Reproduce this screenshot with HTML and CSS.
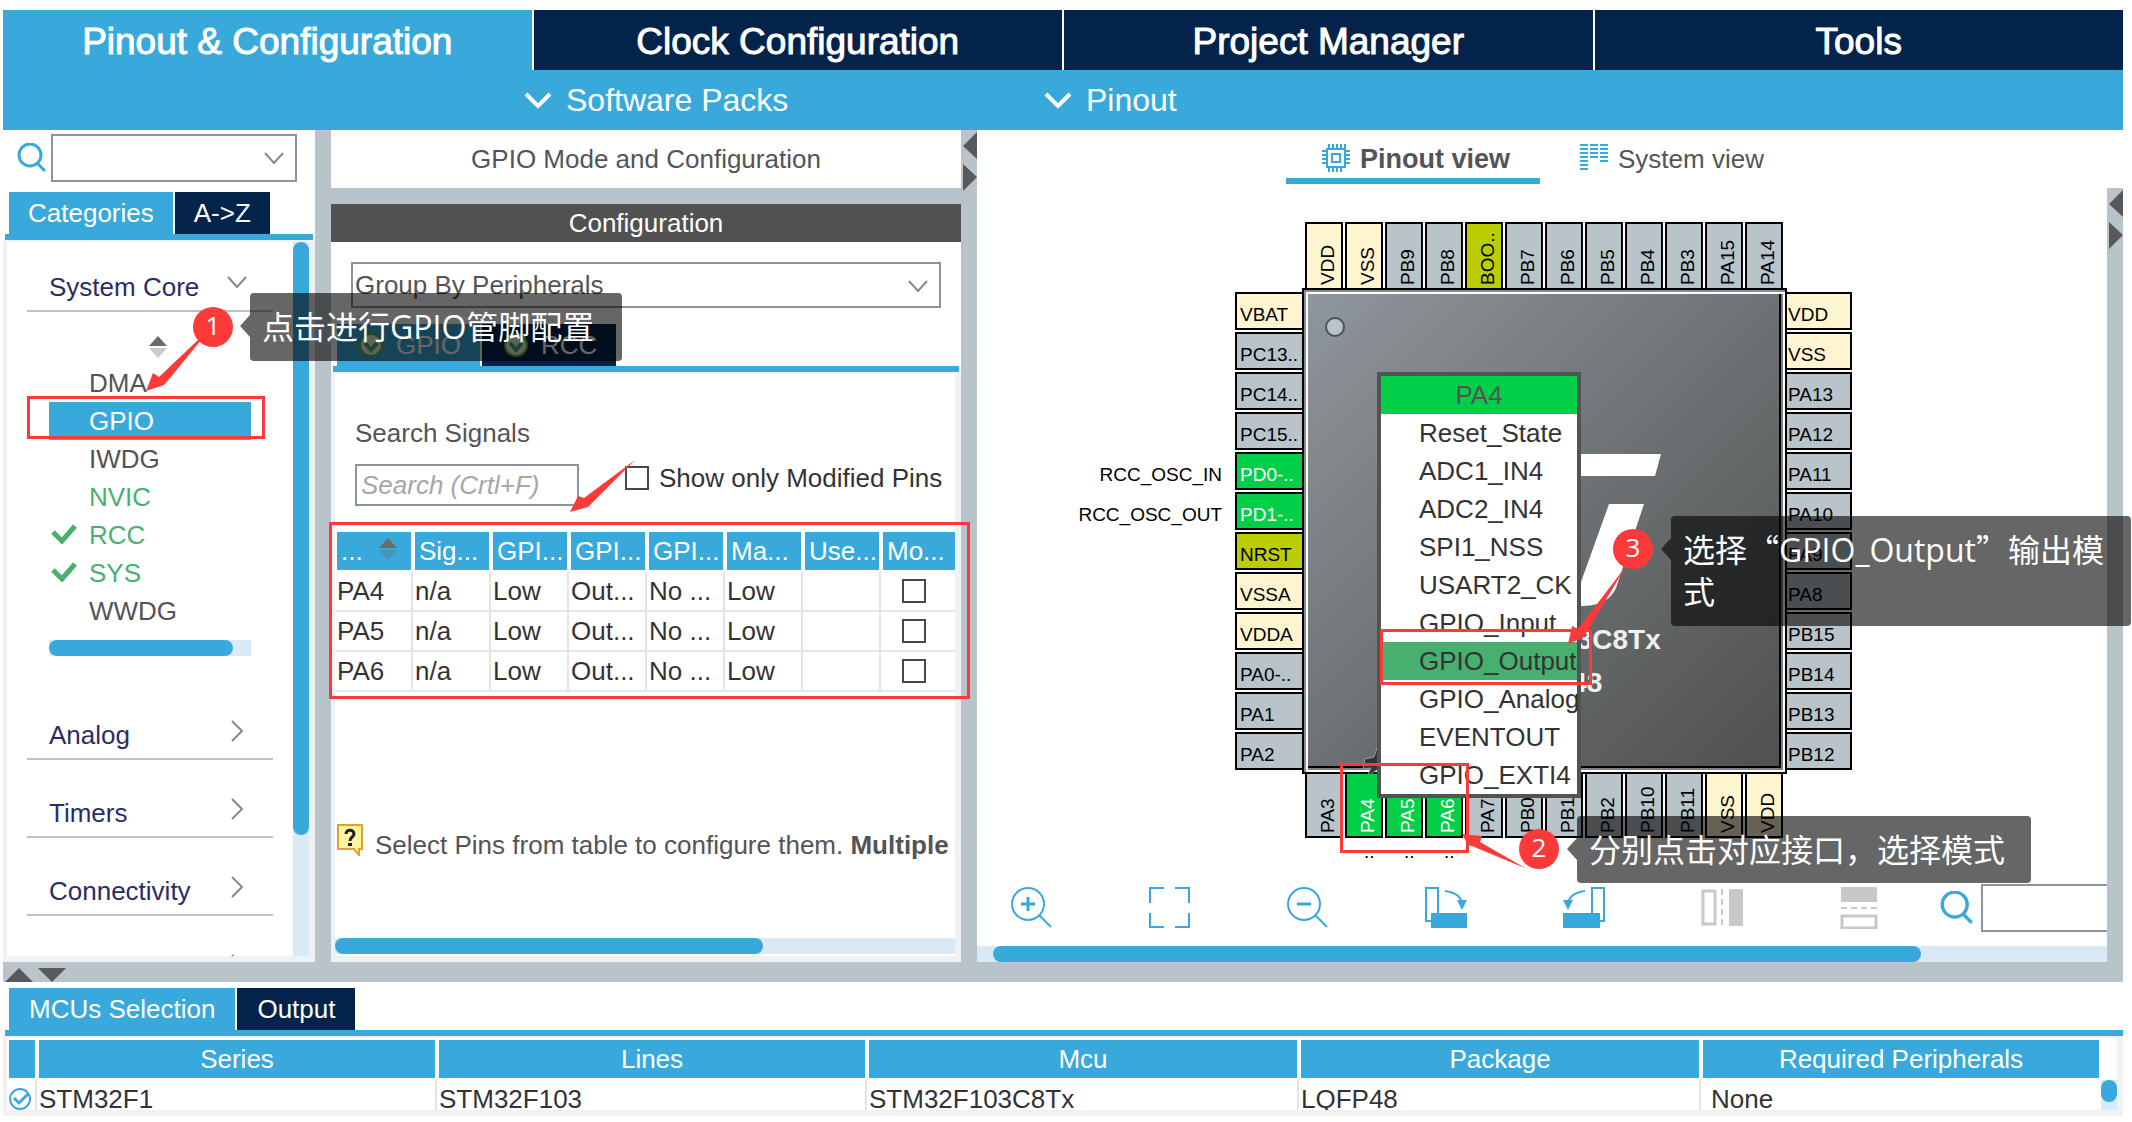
FILE: index.html
```html
<!DOCTYPE html>
<html lang="zh-CN">
<head>
<meta charset="utf-8">
<title>Pinout &amp; Configuration</title>
<link rel="stylesheet" href="styles.css">
</head>
<body>
<svg class="defs" width="0" height="0" aria-hidden="true">
  <symbol id="i-down" viewBox="0 0 20 12"><path d="M1 1l9 10 9-10" fill="none" stroke="#888" stroke-width="2"/></symbol>
  <symbol id="i-down-bold" viewBox="0 0 28 18"><path d="M2 3l12 12L26 3" fill="none" stroke="#fff" stroke-width="4"/></symbol>
  <symbol id="i-right" viewBox="0 0 14 22"><path d="M2 1l10 10L2 21" fill="none" stroke="#888" stroke-width="2"/></symbol>
  <symbol id="i-search" viewBox="0 0 30 30"><circle cx="13" cy="12" r="11" fill="none" stroke="#39a9dc" stroke-width="3"/><path d="M20 20l8 8" stroke="#39a9dc" stroke-width="3"/></symbol>
  <symbol id="i-sort" viewBox="0 0 18 22"><path d="M9 0l9 10H0z" fill="#6b6b6b"/><path d="M0 12h18l-9 10z" fill="#6b6b6b" opacity=".35"/></symbol>
  <symbol id="i-check" viewBox="0 0 26 20"><path d="M2 8l9 9L24 2" fill="none" stroke="#49b170" stroke-width="5"/></symbol>
  <symbol id="i-badge" viewBox="0 0 24 24"><circle cx="12" cy="12" r="11" fill="#eef3ee" stroke="#5cb531" stroke-width="2"/><path d="M6 10l6 7 6-7" fill="none" stroke="#49b170" stroke-width="4"/></symbol>
</svg>

<div class="app">
  <nav class="main-tabs">
    <button class="main-tab active">Pinout &amp; Configuration</button>
    <button class="main-tab">Clock Configuration</button>
    <button class="main-tab">Project Manager</button>
    <button class="main-tab">Tools</button>
  </nav>
  <div class="sub-menu">
    <button class="sub-item packs"><svg width="28" height="18"><use href="#i-down-bold"/></svg>Software Packs</button>
    <button class="sub-item"><svg width="28" height="18"><use href="#i-down-bold"/></svg>Pinout</button>
  </div>

  <main class="work">
    <aside class="side">
      <div class="side-search">
        <svg width="30" height="30"><use href="#i-search"/></svg>
        <div class="select-wrap">
          <select aria-label="Search peripheral"><option></option></select>
          <svg width="20" height="12"><use href="#i-down"/></svg>
        </div>
      </div>
      <div class="tabs"><button class="tab active">Categories</button><button class="tab">A-&gt;Z</button></div>
      <div class="side-body">
        <div class="tree">
          <button class="section">System Core<svg class="open" width="20" height="12"><use href="#i-down"/></svg></button>
          <div class="group">
            <svg class="sort" width="18" height="22"><use href="#i-sort"/></svg>
            <ul class="items">
              <li>DMA</li>
              <li class="selected">GPIO</li>
              <li>IWDG</li>
              <li class="ok">NVIC</li>
              <li class="ok"><svg width="26" height="20"><use href="#i-check"/></svg>RCC</li>
              <li class="ok"><svg width="26" height="20"><use href="#i-check"/></svg>SYS</li>
              <li>WWDG</li>
            </ul>
            <div class="hbar small"><span></span></div>
          </div>
          <button class="section">Analog<svg width="14" height="22"><use href="#i-right"/></svg></button>
          <button class="section">Timers<svg width="14" height="22"><use href="#i-right"/></svg></button>
          <button class="section">Connectivity<svg width="14" height="22"><use href="#i-right"/></svg></button>
          <button class="section last" aria-label="More"><svg width="14" height="22"><use href="#i-right"/></svg></button>
        </div>
        <div class="vbar"><span></span></div>
      </div>
    </aside>

    <div class="splitter"></div>

    <section class="config">
      <h2 class="config-title">GPIO Mode and Configuration</h2>
      <h3 class="config-head">Configuration</h3>
      <div class="config-group">
        <div class="select-wrap">
          <select aria-label="Grouping"><option>Group By Peripherals</option></select>
          <svg width="20" height="12"><use href="#i-down"/></svg>
        </div>
      </div>
      <div class="tabs inner">
        <button class="tab active"><svg width="24" height="24"><use href="#i-badge"/></svg>GPIO</button><button class="tab"><svg width="24" height="24"><use href="#i-badge"/></svg>RCC</button>
      </div>
      <div class="config-body">
        <label class="sig-label" for="sig">Search Signals</label>
        <div class="sig-row">
          <input id="sig" class="sig-input" type="text" placeholder="Search (Crtl+F)">
          <label class="modified"><input type="checkbox" class="box">Show only Modified Pins</label>
        </div>
        <table class="pins-table">
          <thead><tr><th class="sorted">...<svg width="18" height="22"><use href="#i-sort"/></svg></th><th>Sig...</th><th>GPI...</th><th>GPI...</th><th>GPI...</th><th>Ma...</th><th>Use...</th><th>Mo...</th></tr></thead>
          <tbody>
            <tr><td>PA4</td><td>n/a</td><td>Low</td><td>Out...</td><td>No ...</td><td>Low</td><td></td><td class="tick"><input type="checkbox" class="box" aria-label="PA4 modified"></td></tr>
            <tr><td>PA5</td><td>n/a</td><td>Low</td><td>Out...</td><td>No ...</td><td>Low</td><td></td><td class="tick"><input type="checkbox" class="box" aria-label="PA5 modified"></td></tr>
            <tr><td>PA6</td><td>n/a</td><td>Low</td><td>Out...</td><td>No ...</td><td>Low</td><td></td><td class="tick"><input type="checkbox" class="box" aria-label="PA6 modified"></td></tr>
          </tbody>
        </table>
        <p class="hint">
          <svg width="26" height="32" viewBox="0 0 26 32"><path d="M1 1h24v24h-3v6l-5-6H1z" fill="#fff3a0" stroke="#d9a52c" stroke-width="2"/><path d="M9 10c0-5 8-5 8 0 0 3-4 3-4 7" fill="none" stroke="#222" stroke-width="3"/><path d="M11 19h4v3h-4z" fill="#222"/></svg>
          <span>Select Pins from table to configure them. <b>Multiple</b></span>
        </p>
        <div class="hbar config-bar"><span></span></div>
      </div>
    </section>

    <div class="splitter">
      <svg width="16" height="64" viewBox="0 0 16 64"><path d="M16 2v27L2 16zM2 34v27l14-14z" fill="#58595b"/></svg>
    </div>

    <section class="view">
      <div class="view-tabs">
        <button class="view-tab active">
          <svg width="28" height="28" viewBox="0 0 28 28" fill="none" stroke="#39a9dc" stroke-width="2"><path d="M5 5h18v18H5zM10 10h8v8h-8zM7 0v4M11 0v4M15 0v4M19 0v4M7 24v4M11 24v4M15 24v4M19 24v4M23 0v4M0 7h4M0 11h4M0 15h4M0 19h4M24 7h4M24 11h4M24 15h4M24 19h4"/></svg>Pinout view</button>
        <button class="view-tab">
          <svg width="28" height="28" viewBox="0 0 28 28" fill="none" stroke="#39a9dc" stroke-width="2"><path d="M0 1h8M10 1h8M20 1h8M0 5h8M10 5h8M20 5h8M0 9h8M10 9h8M20 9h8M0 13h8M10 13h8M20 13h8M0 17h8M20 17h8M0 21h8M0 25h8"/></svg>System view</button>
      </div>

      <div class="canvas">
        <div class="package">
          <div class="row top">
            <i class="pwr">VDD</i><i class="pwr">VSS</i><i>PB9</i><i>PB8</i><i class="sys">BOO..</i><i>PB7</i><i>PB6</i><i>PB5</i><i>PB4</i><i>PB3</i><i>PA15</i><i>PA14</i>
          </div>
          <div class="col left">
            <i class="pwr">VBAT</i><i>PC13..</i><i>PC14..</i><i>PC15..</i><i class="on"><em>RCC_OSC_IN</em>PD0-..</i><i class="on"><em>RCC_OSC_OUT</em>PD1-..</i><i class="sys">NRST</i><i class="pwr">VSSA</i><i class="pwr">VDDA</i><i>PA0-..</i><i>PA1</i><i>PA2</i>
          </div>
          <div class="die">
            <svg class="logo" width="477" height="490" viewBox="0 0 477 490" aria-hidden="true">
              <circle cx="29" cy="35" r="9" fill="#b8c4ca" stroke="#4a5254" stroke-width="2"/>
              <path d="M155 162h200l-6 22H260l-8 30h-50z" fill="#fff"/>
              <path d="M303 212h35l-28 84q-8 18-35 18V290z" fill="#fff"/>
              <path d="M72 453l-4 12-9 2-2 10 8-1-4 9 11-8z" fill="#333" stroke="#999"/>
            </svg>
            <p class="part">STM32F103C8Tx</p>
            <p class="pkg">LQFP48</p>
          </div>
          <div class="col right">
            <i class="pwr">VDD</i><i class="pwr">VSS</i><i>PA13</i><i>PA12</i><i>PA11</i><i>PA10</i><i>PA9</i><i>PA8</i><i>PB15</i><i>PB14</i><i>PB13</i><i>PB12</i>
          </div>
          <div class="row bottom">
            <i>PA3</i><i class="on">PA4</i><i class="on">PA5</i><i class="on">PA6</i><i>PA7</i><i>PB0</i><i>PB1</i><i>PB2</i><i>PB10</i><i>PB11</i><i class="pwr">VSS</i><i class="pwr">VDD</i>
          </div>
          <div class="stubs"><span>..</span><span>..</span><span>..</span></div>

          <div class="menu" role="menu">
            <div class="menu-title">PA4</div>
            <button>Reset_State</button><button>ADC1_IN4</button><button>ADC2_IN4</button><button>SPI1_NSS</button><button>USART2_CK</button><button>GPIO_Input</button><button class="hot">GPIO_Output</button><button>GPIO_Analog</button><button>EVENTOUT</button><button>GPIO_EXTI4</button>
          </div>

          <div class="frame f-output"></div>
          <div class="frame f-pins"></div>
          <div class="tip t3">选择<q>“</q>GPIO_Output<q>”</q>输出模式</div>
          <div class="tip t2">分别点击对应接口，选择模式</div>
          <svg class="arrow a3" width="60" height="84" viewBox="0 0 60 84"><path d="M59 2L21 66l-5 8L1 80 5 62l6 3z" fill="#fd3a3a"/></svg>
          <svg class="arrow a2" width="68" height="40" viewBox="0 0 68 40"><path d="M66 37L19 10l2-6L1 2l6 11 4 1z" fill="#fd3a3a"/></svg>
          <b class="num n3">3</b>
          <b class="num n2">2</b>
        </div>
      </div>

      <div class="tools">
        <button aria-label="Zoom in"><svg width="42" height="42" viewBox="0 0 42 42" fill="none" stroke="#39a9dc" stroke-width="2"><circle cx="17" cy="17" r="16"/><path d="M28 28l12 12"/><path d="M10 17h14M17 10v14" stroke-width="3"/></svg></button>
        <button aria-label="Fit"><svg width="42" height="42" viewBox="0 0 42 42" fill="none" stroke="#39a9dc" stroke-width="2"><path d="M1 16V1h14M26 1h14v15M1 26v14h14M26 40h14V26"/></svg></button>
        <button aria-label="Zoom out"><svg width="42" height="42" viewBox="0 0 42 42" fill="none" stroke="#39a9dc" stroke-width="2"><circle cx="17" cy="17" r="16"/><path d="M28 28l12 12"/><path d="M10 17h14" stroke-width="3"/></svg></button>
        <button aria-label="Rotate right"><svg width="42" height="42" viewBox="0 0 42 42"><path d="M1 1h12v33H1z" fill="none" stroke="#39a9dc" stroke-width="2"/><path d="M6 26h36v15H6z" fill="#39a9dc"/><path d="M20 4q15 2 17 12" fill="none" stroke="#39a9dc" stroke-width="2"/><path d="M32 13h10l-5 10z" fill="#39a9dc"/></svg></button>
        <button aria-label="Rotate left"><svg width="42" height="42" viewBox="0 0 42 42"><path d="M29 1h12v33H29z" fill="none" stroke="#39a9dc" stroke-width="2"/><path d="M0 26h37v15H0z" fill="#39a9dc"/><path d="M22 4Q7 6 5 16" fill="none" stroke="#39a9dc" stroke-width="2"/><path d="M0 13h10L5 23z" fill="#39a9dc"/></svg></button>
        <button aria-label="Mirror"><svg width="42" height="42" viewBox="0 0 42 42"><path d="M2 4h12v33H2z" fill="none" stroke="#c8c8c8" stroke-width="3"/><path d="M21 2v36" stroke="#c8c8c8" stroke-width="2" stroke-dasharray="6 4"/><path d="M28 2h14v37H28z" fill="#c8c8c8"/></svg></button>
        <button aria-label="Flip"><svg width="42" height="42" viewBox="0 0 42 42"><path d="M2 0h36v15H2zM2 20h6v2H2zM12 20h6v2h-6zM22 20h6v2h-6zM32 20h6v2h-6z" fill="#c8c8c8"/><path d="M3 29h34v12H3z" fill="none" stroke="#c8c8c8" stroke-width="3"/></svg></button>
        <div class="find"><svg width="34" height="34"><use href="#i-search"/></svg><input type="text" aria-label="Find pin"></div>
      </div>
      <div class="hbar view-bar"><span></span></div>
    </section>
    <div class="splitter edge">
      <svg width="16" height="64" viewBox="0 0 16 64"><path d="M16 2v27L2 16zM2 34v27l14-14z" fill="#58595b"/></svg>
    </div>

    <div class="note note-left">
      <div class="frame f-gpio"></div>
      <div class="frame f-table"></div>
      <svg class="arrow a1" width="62" height="72" viewBox="0 0 62 72"><path d="M57 17L25 56l-6 7L1 69 8 51l6 4L54 17z" fill="#fd3a3a"/></svg>
      <svg class="arrow a4" width="66" height="54" viewBox="0 0 66 54"><path d="M66 0L25 41l-6 6L1 52 9 36l6 2z" fill="#fd3a3a"/></svg>
      <div class="tip t1">点击进行GPIO管脚配置</div>
      <b class="num n1">1</b>
    </div>
  </main>

  <div class="h-splitter"><svg width="62" height="14" viewBox="0 0 62 14"><path d="M0 14L14 0l14 14zM33 0h28L47 14z" fill="#58595b"/></svg></div>

  <section class="bottom-panel">
    <div class="tabs"><button class="tab active">MCUs Selection</button><button class="tab">Output</button></div>
    <div class="mcu-body">
      <table class="mcu-table">
        <colgroup><col class="c-mark"><col class="c-series"><col class="c-lines"><col class="c-mcu"><col class="c-pack"><col></colgroup>
        <thead><tr><th></th><th>Series</th><th>Lines</th><th>Mcu</th><th>Package</th><th>Required Peripherals</th></tr></thead>
        <tbody><tr>
          <td><svg width="22" height="22" viewBox="0 0 22 22" fill="none" stroke="#39a9dc" stroke-width="2"><circle cx="11" cy="11" r="10"/><path d="M5 10l5 5 9-9" stroke-width="3"/></svg></td>
          <td>STM32F1</td><td>STM32F103</td><td>STM32F103C8Tx</td><td>LQFP48</td><td class="none">None</td>
        </tr></tbody>
      </table>
      <div class="vbar mcu-bar"><span></span></div>
    </div>
  </section>
</div>
</body>
</html>
```
FILE: styles.css
```css
:root {
  --blue: #39a9dc;
  --navy: #03234b;
  --gray: #b8c4ca;
  --pale: #f0f1f3;
  --track: #d9e9f5;
  --text: #545456;
  --red: #fd3a3a;
}

* { box-sizing: border-box; }

body {
  margin: 0;
  background: #fff;
  font: 26px/38px "Liberation Sans", Arial, sans-serif;
  color: var(--text);
}

button, input, select { font: inherit; color: inherit; margin: 0; }
button { border: 0; background: none; padding: 0; white-space: nowrap; }
h2, h3, p, ul { margin: 0; padding: 0; font-weight: 400; font-size: 26px; }
svg { display: block; flex: none; }
.defs { position: absolute; }

.app {
  display: flex;
  flex-direction: column;
  height: 100vh;
  padding: 10px 9px 6px 3px;
  overflow: hidden;
}

/* header */
.main-tabs { display: grid; grid-template-columns: repeat(4, 1fr); gap: 2px; }
.main-tab {
  height: 60px;
  padding-top: 3px;
  background: var(--navy);
  color: #fff;
  font-size: 37px;
  -webkit-text-stroke: 1px #fff;
}
.main-tab.active { background: var(--blue); }
.sub-menu {
  display: flex;
  height: 60px;
  padding-left: 521px;
  background: var(--blue);
}
.sub-item { display: flex; align-items: center; gap: 14px; color: #fff; font-size: 32px; }
.packs { width: 520px; }

/* work area */
.work {
  position: relative;
  flex: 1;
  min-height: 0;
  display: grid;
  grid-template-columns: 312px 16px minmax(0, 63fr) 16px minmax(0, 113fr) 16px;
  grid-template-rows: minmax(0, 1fr);
}
.splitter { background: var(--gray); }
.edge { margin-top: 58px; }

.tabs { display: flex; gap: 2px; padding-left: 4px; border-bottom: 6px solid var(--blue); margin: 0 2px; }
.tab {
  height: 42px;
  padding: 0 19px;
  background: var(--navy);
  color: #fff;
  display: flex;
  align-items: center;
}
.tab.active { background: var(--blue); }

.select-wrap { position: relative; display: flex; flex: 1; }
.select-wrap select {
  appearance: none;
  width: 100%;
  border: 2px solid #8b949b;
  border-radius: 0;
  background: #fff;
  padding: 0 2px;
}
.select-wrap svg { position: absolute; right: 13px; top: 18px; }

/* left */
.side { display: flex; flex-direction: column; min-height: 0; }
.side-search { display: flex; align-items: center; gap: 4px; padding: 4px 18px 10px 14px; }
.side-search select { height: 48px; }
.side-body {
  flex: 1;
  min-height: 0;
  display: flex;
  border: solid var(--pale);
  border-width: 2px 6px 6px 4px;
}
.tree { flex: 1; overflow: hidden; padding: 0 20px; }
.section {
  display: flex;
  align-items: flex-end;
  justify-content: space-between;
  width: 100%;
  height: 78px;
  padding: 0 29px 4px 22px;
  border-bottom: 2px solid var(--gray);
  color: #2a2c68;
}
.section:first-child { height: 70px; padding-right: 26px; }
.section svg { margin-bottom: 12px; }
.section .open { margin-bottom: 18px; }
.last { justify-content: flex-end; }
.group { padding: 24px 22px 26px; }
.sort { margin: 0 0 6px 100px; }
.items { list-style: none; }
.items li { position: relative; padding-left: 40px; height: 38px; }
.items svg { position: absolute; left: 2px; top: 8px; }
.items .selected { background: var(--blue); color: #fff; }
.items .ok { color: #49b170; }

.hbar { height: 16px; background: var(--track); }
.hbar span { display: block; height: 100%; border-radius: 8px; background: var(--blue); }
.small { margin-top: 10px; }
.small span { width: 91%; }
.vbar { width: 16px; background: var(--track); }
.vbar span { display: block; border-radius: 8px; background: var(--blue); height: 83%; }

/* centre */
.config { display: flex; flex-direction: column; min-height: 0; }
.config-title { text-align: center; line-height: 58px; border-bottom: 16px solid var(--gray); height: 74px; }
.config-head { text-align: center; background: #505150; color: #fff; }
.config-group { padding: 20px 20px 16px; }
.config-group select { height: 46px; }
.inner .tab { gap: 13px; padding-left: 22px; }
.config-body {
  flex: 1;
  min-height: 0;
  display: flex;
  flex-direction: column;
  border: solid var(--pale);
  border-width: 2px 6px 6px 4px;
  padding: 40px 0 2px;
  overflow: hidden;
}
.sig-label { padding-left: 20px; }
.sig-row { display: flex; align-items: flex-start; gap: 46px; padding: 12px 0 26px 20px; }
.sig-input { width: 224px; height: 42px; border: 2px solid #8b949b; padding: 0 4px; }
.sig-input::placeholder { color: #a6a6a6; font-style: italic; opacity: 1; }
.modified { display: flex; align-items: center; gap: 10px; height: 28px; color: #333; white-space: nowrap; }
.box { appearance: none; width: 24px; height: 24px; border: 2px solid #484848; background: #fff; display: block; }

table { border-collapse: separate; border-spacing: 0; table-layout: fixed; }
th, td { padding: 0; font-weight: 400; white-space: nowrap; overflow: hidden; }
.pins-table { width: 624px; flex: none; }
.pins-table th {
  height: 40px;
  text-align: left;
  background: var(--blue);
  color: #fff;
  border: solid #fff;
  border-width: 0 2px 2px;
  padding-left: 4px;
}
.pins-table .sorted svg { float: right; margin: 6px 14px 0 0; }
.pins-table td { height: 40px; color: #333; border: solid #e1e4e8; border-width: 0 2px 2px 0; padding-left: 2px; }
.pins-table td:last-child { border-right: 0; }
.pins-table .tick { padding: 0 12px 0 0; }
.tick .box { margin: 0 auto; }

.hint { display: flex; gap: 12px; margin: 128px 0 0 2px; white-space: nowrap; }
.hint svg { margin-top: 4px; }
.hint span { padding-top: 6px; }
.config-bar { margin-top: auto; flex: none; }
.config-bar span { width: 69%; }

/* right */
.view { display: flex; flex-direction: column; min-height: 0; }
.view-tabs { display: flex; justify-content: center; gap: 4px; margin-top: 12px; margin-bottom: 38px; }
.view-tab { display: flex; align-items: flex-start; gap: 10px; height: 42px; padding: 0 34px 0 36px; border-bottom: 6px solid transparent; line-height: 34px; }
.view-tab svg { margin-top: 2px; }
.view-tab.active { font-size: 27px; font-weight: 700; border-color: var(--blue); width: 254px; padding-right: 0; }
.canvas { display: flex; justify-content: center; flex: 1; min-height: 0; }

.package {
  position: relative;
  flex: none;
  display: grid;
  grid-template-columns: 67px 485px 65px;
  grid-template-rows: 66px 486px 64px;
  margin-left: 3px;
  height: 616px;
  font-size: 19px;
}
.package i {
  font-style: normal;
  color: #000;
  background: var(--gray);
  border: 2px solid #000;
  line-height: 42px;
  position: relative;
}
.package .pwr { background: #fff5d0; }
.package .sys { background: #bbcc00; }
.package .on { background: #02cf48; color: #fff; }
.col { display: flex; flex-direction: column; gap: 2px; padding-top: 4px; }
.col i { height: 38px; padding-left: 3px; }
.left { grid-area: 2 / 1; }
.left i { border-right: 0; }
.left em { position: absolute; right: 80px; color: #000; font-style: normal; }
.right { grid-area: 2 / 3; }
.right i { border-left: 0; padding-left: 1px; }
.row { grid-column: 2; display: flex; gap: 2px; padding-left: 3px; }
.row i { width: 38px; writing-mode: vertical-rl; transform: rotate(180deg); padding-top: 3px; }
.top { grid-row: 1; }
.top i { border-top-width: 0; }
.bottom { grid-row: 3; }
.bottom i { border-bottom-width: 0; }
.die {
  grid-area: 2 / 2;
  border: 2px solid #000;
  background: linear-gradient(135deg, #8f979f, #7f8486 25%, #6a6e70 55%, #4f504f);
  box-shadow: inset 2px 2px #888d92, inset -2px -2px #fff, inset 4px 4px #fff, inset -4px -4px #808080, inset -6px -6px #000;
  padding: 328px 0 0 10px;
  text-align: center;
  position: relative;
}
.logo { position: absolute; left: 2px; top: 2px; }
.die p { position: relative; color: #f0f0f0; font-size: 28px; font-weight: 700; line-height: 43px; }
.stubs { position: absolute; left: 129px; top: 620px; display: flex; color: #000; line-height: 20px; }
.stubs span { width: 40px; }

.menu {
  position: absolute;
  left: 142px;
  top: 150px;
  width: 204px;
  border: 4px solid #505453;
  background: #fff;
  font-size: 26px;
  display: flex;
  flex-direction: column;
}
.menu-title { background: #02cf48; text-align: center; }
.menu button { height: 38px; padding-left: 38px; text-align: left; color: #333; }
.menu .hot { background: #48b06f; }

.tools { display: grid; grid-template-columns: repeat(6, 138px) 101px 1fr; align-items: center; height: 48px; margin-bottom: 14px; padding-left: 34px; flex: none; }
.find { display: flex; align-items: center; gap: 7px; min-width: 0; }
.find input { flex: 1; min-width: 0; height: 48px; border: 2px solid #8b949b; border-right: 0; background: #fff; }
.view-bar { padding-left: 16px; flex: none; }
.view-bar span { width: 928px; max-width: 100%; }

/* tutorial callouts */
.note-left { position: absolute; left: 0; top: 0; }
.frame { position: absolute; border: 3px solid var(--red); }
.f-gpio { left: 24px; top: 266px; width: 238px; height: 43px; }
.f-table { left: 326px; top: 392px; width: 641px; height: 177px; }
.f-output { left: 145px; top: 407px; width: 212px; height: 56px; }
.f-pins { left: 105px; top: 541px; width: 129px; height: 90px; }
.arrow { position: absolute; }
.a1 { left: 142px; top: 192px; }
.a4 { left: 566px; top: 330px; }
.a3 { left: 332px; top: 342px; }
.a2 { left: 226px; top: 610px; }
.num {
  position: absolute;
  width: 40px;
  height: 40px;
  border-radius: 50%;
  background: var(--red);
  color: #fff;
  font: 26px/37px "Open Sans", "Noto Sans", sans-serif;
  text-align: center;
}
.n1 { left: 190px; top: 177px; }
.n2 { left: 284px; top: 607px; }
.n3 { left: 378px; top: 307px; }
.tip {
  position: absolute;
  background: rgba(0, 0, 0, .6);
  border-radius: 4px;
  color: #fff;
  padding: 13px 12px;
  font: 32px/42px "Open Sans", "Noto Sans CJK SC", sans-serif;
}
.tip::before {
  content: "";
  position: absolute;
  left: -10px;
  top: 22px;
  border: solid transparent;
  border-width: 11px 10px 11px 0;
  border-right-color: rgba(0, 0, 0, .6);
}
.tip q { font-family: "Noto Sans CJK SC", sans-serif; quotes: none; }
.tip q::before, .tip q::after { content: none; }
.t1 { left: 247px; top: 163px; width: 372px; height: 68px; white-space: nowrap; }
.t2 { left: 342px; top: 594px; width: 454px; height: 67px; white-space: nowrap; }
.t3 { left: 436px; top: 294px; width: 460px; height: 110px; padding-top: 11px; }

/* bottom */
.h-splitter { background: var(--gray); height: 20px; padding: 6px 0 0 2px; flex: none; }
.bottom-panel { flex: none; padding-top: 6px; }
.bottom-panel .tabs { margin-right: 0; }
.bottom-panel .tab { padding: 0 20px; }
.mcu-body { display: flex; height: 80px; overflow: hidden; border: solid var(--pale); border-width: 2px 6px 6px 4px; padding-top: 2px; }
.mcu-table { flex: 1; width: 100%; }
.mcu-table th { height: 40px; background: var(--blue); color: #fff; border: solid #fff; border-width: 0 2px 2px; }
.mcu-table td { height: 38px; color: #333; border-right: 2px solid #e1e4e8; padding-left: 2px; }
.mcu-table td:last-child { border-right: 0; }
.mcu-table td.none { padding-left: 10px; }
.c-mark { width: 30px; }
.c-series { width: 400px; }
.c-lines { width: 430px; }
.c-mcu { width: 432px; }
.c-pack { width: 402px; }
.mcu-bar { margin-top: 40px; }
.mcu-bar span { height: 22px; }
```
